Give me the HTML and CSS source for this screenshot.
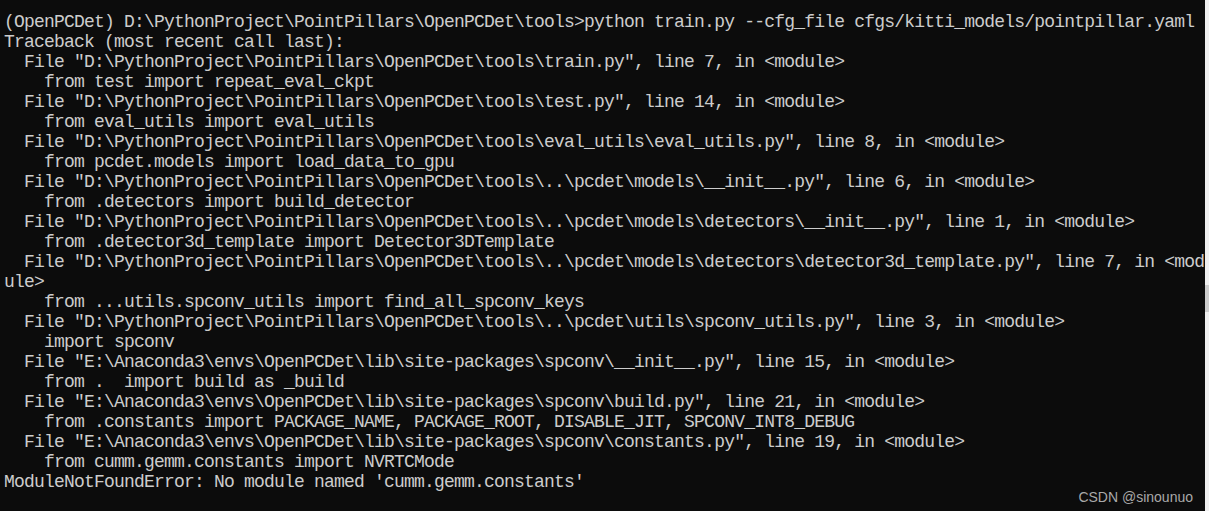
FILE: index.html
```html
<!DOCTYPE html>
<html>
<head>
<meta charset="utf-8">
<link rel="stylesheet" href="styles.css">
</head>
<body>
<div class="window">
<pre class="console">(OpenPCDet) D:\PythonProject\PointPillars\OpenPCDet\tools&gt;python train.py --cfg_file cfgs/kitti_models/pointpillar.yaml
Traceback (most recent call last):
  File "D:\PythonProject\PointPillars\OpenPCDet\tools\train.py", line 7, in &lt;module&gt;
    from test import repeat_eval_ckpt
  File "D:\PythonProject\PointPillars\OpenPCDet\tools\test.py", line 14, in &lt;module&gt;
    from eval_utils import eval_utils
  File "D:\PythonProject\PointPillars\OpenPCDet\tools\eval_utils\eval_utils.py", line 8, in &lt;module&gt;
    from pcdet.models import load_data_to_gpu
  File "D:\PythonProject\PointPillars\OpenPCDet\tools\..\pcdet\models\__init__.py", line 6, in &lt;module&gt;
    from .detectors import build_detector
  File "D:\PythonProject\PointPillars\OpenPCDet\tools\..\pcdet\models\detectors\__init__.py", line 1, in &lt;module&gt;
    from .detector3d_template import Detector3DTemplate
  File "D:\PythonProject\PointPillars\OpenPCDet\tools\..\pcdet\models\detectors\detector3d_template.py", line 7, in &lt;mod
ule&gt;
    from ...utils.spconv_utils import find_all_spconv_keys
  File "D:\PythonProject\PointPillars\OpenPCDet\tools\..\pcdet\utils\spconv_utils.py", line 3, in &lt;module&gt;
    import spconv
  File "E:\Anaconda3\envs\OpenPCDet\lib\site-packages\spconv\__init__.py", line 15, in &lt;module&gt;
    from .  import build as _build
  File "E:\Anaconda3\envs\OpenPCDet\lib\site-packages\spconv\build.py", line 21, in &lt;module&gt;
    from .constants import PACKAGE_NAME, PACKAGE_ROOT, DISABLE_JIT, SPCONV_INT8_DEBUG
  File "E:\Anaconda3\envs\OpenPCDet\lib\site-packages\spconv\constants.py", line 19, in &lt;module&gt;
    from cumm.gemm.constants import NVRTCMode
ModuleNotFoundError: No module named 'cumm.gemm.constants'</pre>
<div class="scrollbar"><div class="thumb"></div></div>
<div class="watermark">CSDN @sinounuo</div>
</div>
</body>
</html>
```

FILE: styles.css
```css
html, body {
  margin: 0;
  padding: 0;
  background: #0c0c0c;
}

.window {
  position: relative;
  display: flex;
  align-items: flex-start;
  width: 1209px;
  height: 511px;
  overflow: hidden;
  background: #0c0c0c;
}

.console {
  flex: 1;
  margin: 0;
  padding: 12px 0 0 4px;
  font-family: "Liberation Mono", "DejaVu Sans Mono", monospace;
  font-size: 18px;
  letter-spacing: -0.8px;
  line-height: 20px;
  color: #cccccc;
  white-space: pre;
  overflow: hidden;
}

.scrollbar {
  align-self: stretch;
  width: 4px;
  margin-left: 1px;
  background: #f0f0f0;
  display: flex;
  flex-direction: column;
}

.thumb {
  margin-top: 285px;
  height: 27px;
  background: #cdcdcd;
}

.watermark {
  position: absolute;
  right: 16px;
  bottom: 8px;
  font-family: "Liberation Sans", Arial, sans-serif;
  font-size: 14px;
  line-height: 12px;
  color: #a9a9a9;
}
```
